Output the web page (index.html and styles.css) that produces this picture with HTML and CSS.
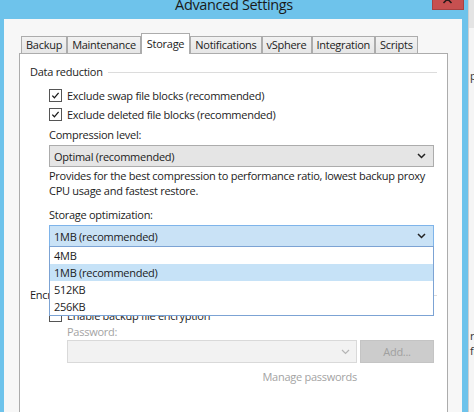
FILE: index.html
```html
<!DOCTYPE html>
<html>
<head>
<meta charset="utf-8">
<title>Advanced Settings</title>
<link rel="stylesheet" href="styles.css">
</head>
<body>
<div class="screen">
  <div class="window">
    <div class="titlebar">
      <span class="tb-spacer"></span>
      <div class="title">Advanced Settings</div>
      <div class="tb-right">
        <div class="close">
          <svg class="close-x" width="32" height="10" viewBox="0 0 32 10"><path d="M11.5 -4 L19.5 4 M19.5 -4 L11.5 4" stroke="#2b1a1a" stroke-width="1.6" fill="none"/></svg>
        </div>
      </div>
    </div>
    <div class="client">
      <div class="tabs">
        <div class="tab">Backup</div>
        <div class="tab">Maintenance</div>
        <div class="tab active">Storage</div>
        <div class="tab">Notifications</div>
        <div class="tab">vSphere</div>
        <div class="tab">Integration</div>
        <div class="tab">Scripts</div>
      </div>
      <div class="panel">
        <div class="group-head"><span>Data reduction</span><div class="rule"></div></div>
        <div class="indent">
          <div class="check-row first">
            <span class="cb"><svg width="11" height="11" viewBox="0 0 11 11"><path d="M2.3 5.6 L4.4 7.8 L8.6 2.8" stroke="#1a1a1a" stroke-width="1.3" fill="none"/></svg></span>
            <span>Exclude swap file blocks (recommended)</span>
          </div>
          <div class="check-row">
            <span class="cb"><svg width="11" height="11" viewBox="0 0 11 11"><path d="M2.3 5.6 L4.4 7.8 L8.6 2.8" stroke="#1a1a1a" stroke-width="1.3" fill="none"/></svg></span>
            <span>Exclude deleted file blocks (recommended)</span>
          </div>
          <div class="field-label lbl-compression">Compression level:</div>
          <div class="combo gray">
            <span>Optimal (recommended)</span>
            <svg class="chev" width="9" height="6" viewBox="0 0 9 6"><path d="M1 1 L4.5 4.5 L8 1" stroke="#222" stroke-width="1.5" fill="none"/></svg>
          </div>
          <p class="desc">Provides for the best compression to performance ratio, lowest backup proxy<br>CPU usage and fastest restore.</p>
          <div class="field-label lbl-storage">Storage optimization:</div>
          <div class="combo-wrap">
            <div class="combo focused">
              <span>1MB (recommended)</span>
              <svg class="chev" width="9" height="6" viewBox="0 0 9 6"><path d="M1 1 L4.5 4.5 L8 1" stroke="#222" stroke-width="1.5" fill="none"/></svg>
            </div>
            <ul class="listbox">
              <li>4MB</li>
              <li class="hot">1MB (recommended)</li>
              <li>512KB</li>
              <li>256KB</li>
            </ul>
          </div>
        </div>
        <div class="group-head enc"><span>Encryption</span><div class="rule"></div></div>
        <div class="indent">
          <div class="check-row enc-row">
            <span class="cb"></span>
            <span>Enable backup file encryption</span>
          </div>
          <div class="sub">
            <div class="field-label disabled pw-label">Password:</div>
            <div class="pw-row">
              <div class="combo dis">
                <span></span>
                <svg class="chev" width="9" height="6" viewBox="0 0 9 6"><path d="M1 1 L4.5 4.5 L8 1" stroke="#b5b5b5" stroke-width="1.2" fill="none"/></svg>
              </div>
              <div class="btn dis">Add...</div>
            </div>
            <div class="manage">Manage passwords</div>
          </div>
        </div>
      </div>
    </div>
  </div>
  <div class="outside">
    <div class="out-top"></div>
    <div class="out-text">p</div>
    <div class="out-text low">re</div>
    <div class="out-text">fi</div>
  </div>
</div>
</body>
</html>
```

FILE: styles.css
```css
* { box-sizing: border-box; }
html, body {
  margin: 0;
  padding: 0;
  width: 474px;
  height: 412px;
  overflow: hidden;
  background: #f3f3f3;
  font-family: "Open Sans", "Noto Sans", "DejaVu Sans", sans-serif;
  font-size: 11px;
  letter-spacing: -0.27px;
  color: #1c1c1c;
}
.screen {
  display: flex;
  width: 474px;
  height: 412px;
}
.window {
  width: 468px;
  height: 412px;
  background: #6ec3eb;
  border-left: 4px solid #6ec3eb;
  border-right: 6px solid #6ec3eb;
  display: flex;
  flex-direction: column;
}
.titlebar {
  height: 19px;
  display: grid;
  grid-template-columns: 1fr auto 1fr;
  overflow: hidden;
  margin-left: -4px;
  margin-right: -6px;
}
.title {
  font-size: 14.5px;
  letter-spacing: -0.35px;
  line-height: 14px;
  margin-top: -2px;
  color: #1a1a1a;
  white-space: nowrap;
}
.tb-right {
  display: flex;
  justify-content: flex-end;
  padding-right: 4px;
}
.close {
  width: 32px;
  height: 10px;
  background: #c75050;
  border: 1px solid #a84141;
  border-top: none;
}
.close-x { display: block; margin: -1px 0 0 -1px; }

.client {
  flex: 1;
  background: #f7f7f7;
  padding: 14px 0 0 15px;
  overflow: hidden;
}
.tabs {
  display: flex;
  align-items: flex-end;
  height: 21px;
  margin: 0 0 -1px 2px;
  position: relative;
  z-index: 1;
}
.tab {
  height: 17px;
  margin-bottom: 1px;
  padding: 0 4px;
  line-height: 16px;
  border: 1px solid #acacac;
  border-bottom: none;
  background: linear-gradient(#f2f2f2, #e6e6e6);
  white-space: nowrap;
}
.tab.active {
  height: 21px;
  margin-bottom: 0;
  padding: 2px 5px 0 5px;
  background: #ffffff;
  border-color: #acacac;
}
.panel {
  width: 429px;
  height: 400px;
  background: #ffffff;
  border: 1px solid #acacac;
  padding: 10px 10px 0 10px;
}
.group-head {
  display: flex;
  align-items: center;
  gap: 5px;
  height: 16px;
  line-height: 16px;
}
.group-head .rule {
  flex: 1;
  height: 1px;
  background: #dcdcdc;
}
.group-head.enc { margin-top: 40px; }
.indent {
  margin: 0 3px 0 19px;
}
.check-row {
  display: flex;
  align-items: center;
  gap: 5px;
  height: 19px;
  white-space: nowrap;
}
.check-row.first { margin-top: 6px; }
.cb {
  width: 13px;
  height: 13px;
  border: 1px solid #555555;
  background: #ffffff;
  display: flex;
  align-items: center;
  justify-content: center;
  flex: none;
}
.cb svg { display: block; }
.field-label {
  height: 16px;
  line-height: 16px;
}
.lbl-compression { margin-top: 3px; }
.lbl-storage { margin-top: 9px; }
.combo {
  height: 22px;
  margin-top: 2px;
  border: 1px solid #acacac;
  display: flex;
  align-items: center;
  justify-content: space-between;
  padding: 0 7px 0 4px;
}
.combo.gray { background: #e5e5e5; }
.combo.focused { background: #c9e2f6; border-color: #7eb4ea; }
.chev { display: block; }
.desc {
  margin: 1px 0 0 0;
  line-height: 15px;
  white-space: nowrap;
}
.combo-wrap { position: relative; }
.listbox {
  position: absolute;
  left: 0;
  right: 0;
  top: calc(100% - 1px);
  margin: 0;
  padding: 0;
  list-style: none;
  background: #ffffff;
  border: 1px solid #7ca3d4;
  z-index: 5;
}
.listbox li {
  height: 17px;
  line-height: 17px;
  padding-left: 4px;
}
.listbox li.hot { background: #c6e2f7; }
.check-row.enc-row { height: 17px; margin-top: 4px; }
.sub { margin-left: 18px; }
.field-label.disabled { color: #a3a3a3; }
.pw-label { height: 15px; line-height: 15px; }
.pw-row {
  display: flex;
  gap: 3px;
  margin-top: 1px;
  height: 23px;
}
.combo.dis {
  width: 290px;
  height: 23px;
  margin-top: 0;
  background: #f2f2f2;
  border-color: #d9d9d9;
  padding-right: 6px;
}
.btn.dis {
  flex: 1;
  background: #cccccc;
  border: 1px solid #c4c4c4;
  color: #a0a0a0;
  display: flex;
  align-items: center;
  justify-content: center;
}
.manage {
  width: 290px;
  margin-top: 6px;
  line-height: 16px;
  text-align: right;
  color: #a3a3a3;
}
.outside {
  width: 6px;
  height: 412px;
  background: #f5f5f5;
  border-left: 1px solid #cfcfcf;
  overflow: hidden;
  font-size: 11px;
  line-height: 15px;
  color: #333;
}
.out-top { height: 28px; background: #e4e4e4; }
.out-text { margin-left: 1px; margin-top: 40px; white-space: nowrap; }
.out-text.low { margin-top: 245px; }
.out-text.low + .out-text { margin-top: 0; }
```
